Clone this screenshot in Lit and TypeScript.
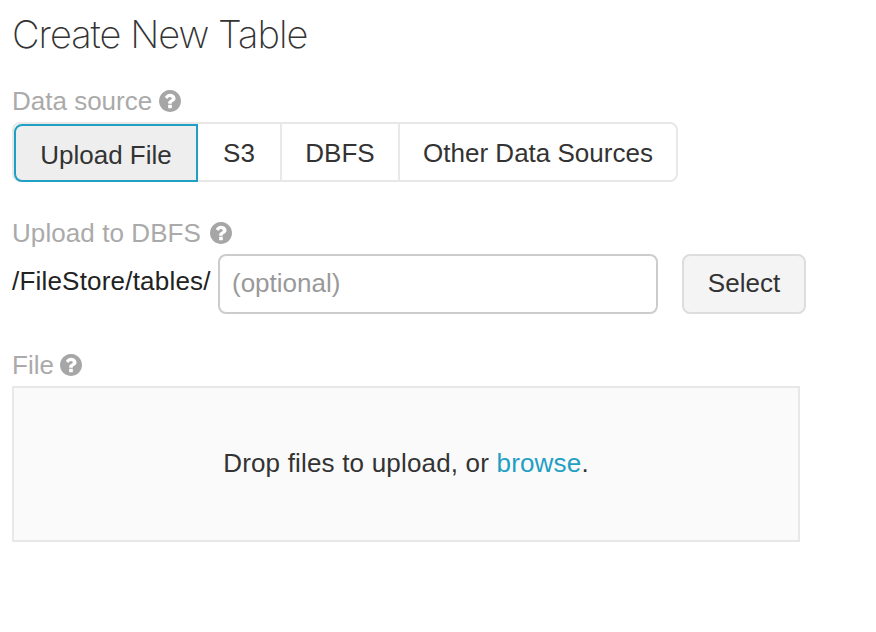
import {LitElement, html, css, svg} from 'lit';
import {customElement} from 'lit/decorators.js';

const helpIcon = svg`<path d="M1024 1376v-192q0-14-9-23t-23-9H800q-14 0-23 9t-9 23v192q0 14 9 23t23 9h192q14 0 23-9t9-23zm256-672q0-88-55.500-163T1086 425t-170-41q-243 0-371 213-15 24 8 42l132 100q7 6 19 6 16 0 25-12 53-68 86-92 34-24 86-24 48 0 85.500 26t37.500 59q0 38-20 61t-68 45q-63 28-115.500 86.500T768 1020v36q0 14 9 23t23 9h192q14 0 23-9t9-23q0-19 21.500-49.500T1100 957q32-18 49-28.500t46-35 44.500-48 28-60.500 12.500-81zm384 192q0 209-103 385.500T1281.500 1561 896 1664t-385.500-103T231 1281.500 128 896t103-385.500T510.500 231 896 128t385.500 103T1561 510.500 1664 896z"/>`;

@customElement('app-root')
export class AppRoot extends LitElement {
  static styles = css`
    :host {
      display: block;
      height: 632px;
      box-sizing: border-box;
      padding: 12px 12px 0;
      background: #fff;
      color: #333;
      font-family: 'Liberation Sans', Arial, sans-serif;
      font-size: 26px;
      line-height: 36px;
    }

    h1 {
      margin: 0 0 27px;
      font-family: 'Inter', sans-serif;
      font-weight: 200;
      font-size: 38px;
      letter-spacing: -1px;
      line-height: 44px;
      color: #333;
    }

    .label {
      display: flex;
      align-items: center;
      gap: 7px;
      height: 36px;
      color: #aaa;
    }

    .label svg {
      width: 22px;
      height: 22px;
      fill: #a6a6a6;
    }

    .tabs {
      display: inline-flex;
      box-sizing: border-box;
      height: 60px;
      margin-top: 3px;
      border: 2px solid #e8e8e8;
      border-radius: 8px;
    }

    .tab {
      display: flex;
      align-items: center;
      justify-content: center;
      box-sizing: border-box;
      padding-top: 2px;
      border-left: 2px solid #e8e8e8;
    }

    .tab.active {
      width: 184px;
      padding-top: 4px;
      margin-bottom: -2px;
      background: #eee;
      border: 2px solid #1f9fc4;
      border-radius: 8px 0 0 8px;
    }

    .tab.s3 {
      width: 82px;
      border-left: none;
    }

    .tab.dbfs {
      width: 118px;
    }

    .tab.other {
      width: 278px;
    }

    .upload-label {
      margin-top: 33px;
      gap: 9px;
      letter-spacing: 0.08px;
    }

    .path-row {
      display: flex;
      margin-top: 3px;
    }

    .path {
      width: 206px;
      padding-top: 9px;
      color: #222;
      letter-spacing: 0.2px;
      white-space: nowrap;
    }

    .input {
      display: flex;
      align-items: center;
      box-sizing: border-box;
      width: 440px;
      height: 60px;
      padding: 0 12px 2px;
      border: 2px solid #ccc;
      border-radius: 8px;
      color: #999;
    }

    .select {
      display: flex;
      align-items: center;
      justify-content: center;
      box-sizing: border-box;
      width: 124px;
      height: 60px;
      margin-left: 24px;
      padding-bottom: 2px;
      background: #f4f4f4;
      border: 2px solid #ddd;
      border-radius: 8px;
    }

    .file-label {
      margin-top: 33px;
      gap: 6px;
    }

    .drop {
      display: flex;
      justify-content: center;
      box-sizing: border-box;
      width: 788px;
      height: 156px;
      margin-top: 3px;
      padding-top: 57px;
      background: #fafafa;
      border: 2px solid #e8e8e8;
      letter-spacing: 0.18px;
    }

    .drop a {
      color: #1f9fc4;
      text-decoration: none;
    }
  `;

  private _label(text: string, extra = '') {
    return html`
      <div class="label ${extra}">
        ${text}
        <svg viewBox="128 128 1536 1536">${helpIcon}</svg>
      </div>
    `;
  }

  render() {
    return html`
      <h1>Create New Table</h1>

      ${this._label('Data source')}
      <div class="tabs">
        <div class="tab active">Upload File</div>
        <div class="tab s3">S3</div>
        <div class="tab dbfs">DBFS</div>
        <div class="tab other">Other Data Sources</div>
      </div>

      ${this._label('Upload to DBFS', 'upload-label')}
      <div class="path-row">
        <div class="path">/FileStore/tables/</div>
        <div class="input">(optional)</div>
        <div class="select">Select</div>
      </div>

      ${this._label('File', 'file-label')}
      <div class="drop">
        <span>Drop files to upload, or <a href="#">browse</a>.</span>
      </div>
    `;
  }
}
